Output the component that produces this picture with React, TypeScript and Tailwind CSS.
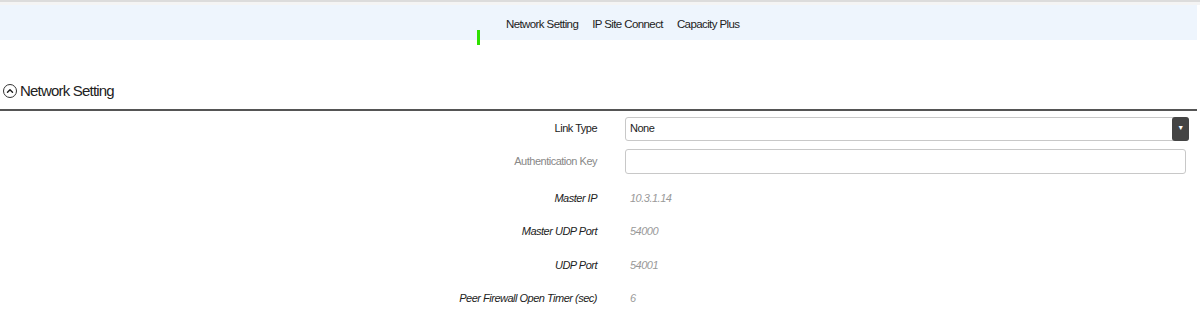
import { ChevronUp } from 'lucide-react';

const font = { fontFamily: '"Liberation Sans", Arial, sans-serif' };

const readonlyRows = [
  { label: 'Master IP', value: '10.3.1.14' },
  { label: 'Master UDP Port', value: '54000' },
  { label: 'UDP Port', value: '54001' },
  { label: 'Peer Firewall Open Timer (sec)', value: '6' },
];

export default function App() {
  return (
    <div className="w-[1200px] h-[317px] bg-white overflow-hidden text-[#222]" style={font}>
      <div className="h-[5px] border-t-2 border-[#dcdcdc] bg-[#f4f4f4]" />
      <div className="relative h-[35px] bg-[#eef5fd] mr-[3px]">
        <div className="absolute left-[477px] top-[25px] h-[15px] w-[3px] bg-[#2ee000]" />
        <nav className="flex h-full items-center pl-[506px] gap-[14px] text-[11.5px] tracking-[-0.6px] pt-[4px]">
          <span>Network Setting</span>
          <span>IP Site Connect</span>
          <span>Capacity Plus</span>
        </nav>
      </div>

      <div className="mt-[40px] flex items-center gap-[3px] pl-[3px] h-[22px]">
        <span className="flex h-[14px] w-[14px] items-center justify-center rounded-full border border-[#333]">
          <ChevronUp className="h-[10px] w-[10px]" strokeWidth={3.5} />
        </span>
        <span className="text-[15px] tracking-[-0.8px]">Network Setting</span>
      </div>
      <div className="mt-[7px] mr-[3px] h-[2px] bg-[#555]" />

      <div className="flex flex-col text-[11px] tracking-[-0.5px]">
        <div className="mt-[5px] flex items-center h-[25px]">
          <label className="w-[597px] text-right">Link Type</label>
          <div className="ml-[28px] flex h-[24px] w-[564px] items-center rounded-[3px] border border-[#c8c8c8] pl-[4px]">
            <span className="flex-1">None</span>
            <span className="flex h-[24px] w-[17px] items-center justify-center rounded-[3px] bg-[#444] text-white text-[7px] -mr-[1px]">▼</span>
          </div>
        </div>
        <div className="mt-[8px] flex items-center h-[25px]">
          <label className="w-[597px] text-right text-[#888]">Authentication Key</label>
          <div className="ml-[28px] h-[25px] w-[561px] rounded-[3px] border border-[#c8c8c8]" />
        </div>
        <div className="mt-[7px] flex flex-col italic">
          {readonlyRows.map((row) => (
            <div key={row.label} className="flex items-center h-[33.5px]">
              <label className="w-[597px] text-right">{row.label}</label>
              <span className="ml-[33px] text-[#999]">{row.value}</span>
            </div>
          ))}
        </div>
      </div>
    </div>
  );
}
